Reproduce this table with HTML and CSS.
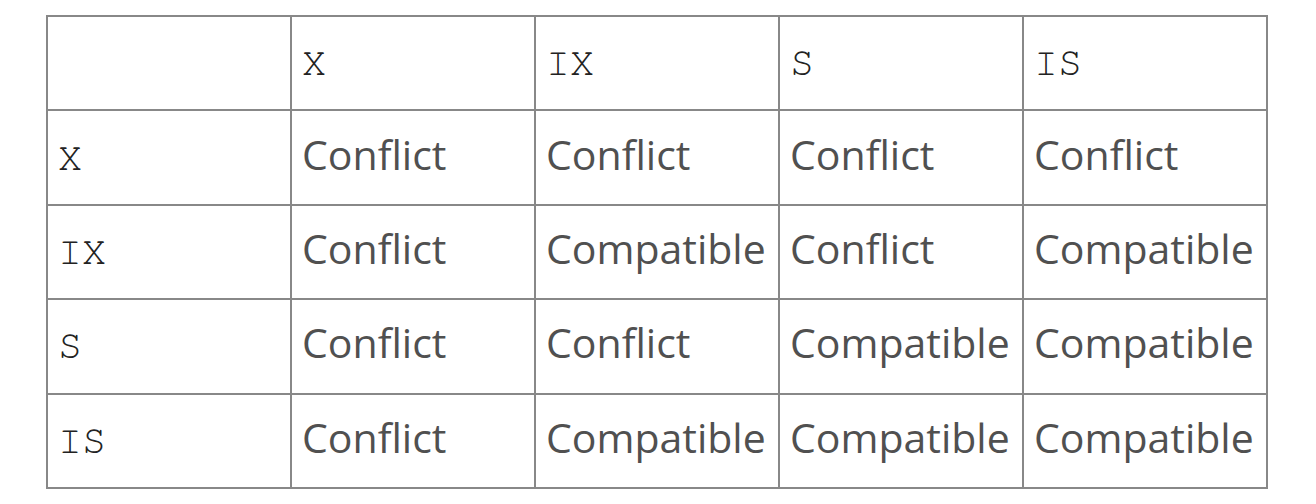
FILE: index.html
```html
<!DOCTYPE html>
<html>
<head>
<meta charset="utf-8">
<link rel="stylesheet" href="styles.css">
</head>
<body>
<div class="page">
<table class="matrix">
  <thead>
    <tr><th></th><th><code>X</code></th><th><code>IX</code></th><th><code>S</code></th><th><code>IS</code></th></tr>
  </thead>
  <tbody>
    <tr><td><code>X</code></td><td>Conflict</td><td>Conflict</td><td>Conflict</td><td>Conflict</td></tr>
    <tr><td><code>IX</code></td><td>Conflict</td><td>Compatible</td><td>Conflict</td><td>Compatible</td></tr>
    <tr><td><code>S</code></td><td>Conflict</td><td>Conflict</td><td>Compatible</td><td>Compatible</td></tr>
    <tr><td><code>IS</code></td><td>Conflict</td><td>Compatible</td><td>Compatible</td><td>Compatible</td></tr>
  </tbody>
</table>
</div>
</body>
</html>
```
FILE: styles.css
```css
html, body { margin: 0; padding: 0; background: #fff; }
.page { padding: 15px 0 0 46px; }
.matrix {
  border-collapse: collapse;
  table-layout: fixed;
  width: 1222px;
  font-family: "Open Sans", sans-serif;
  font-size: 41px;
  color: #505050;
}
.matrix th, .matrix td {
  border: 2px solid #888;
  height: 94.4px;
  padding: 0 0 8px 10px;
  box-sizing: border-box;
  text-align: left;
  font-weight: normal;
  vertical-align: middle;
  white-space: nowrap;
  overflow: visible;
}
.matrix code {
  font-family: "Nimbus Mono PS", "Nimbus Mono L", "FreeMono", "Courier New", Courier, "Liberation Mono", monospace;
  font-size: 40px;
  color: #222;
}
```
